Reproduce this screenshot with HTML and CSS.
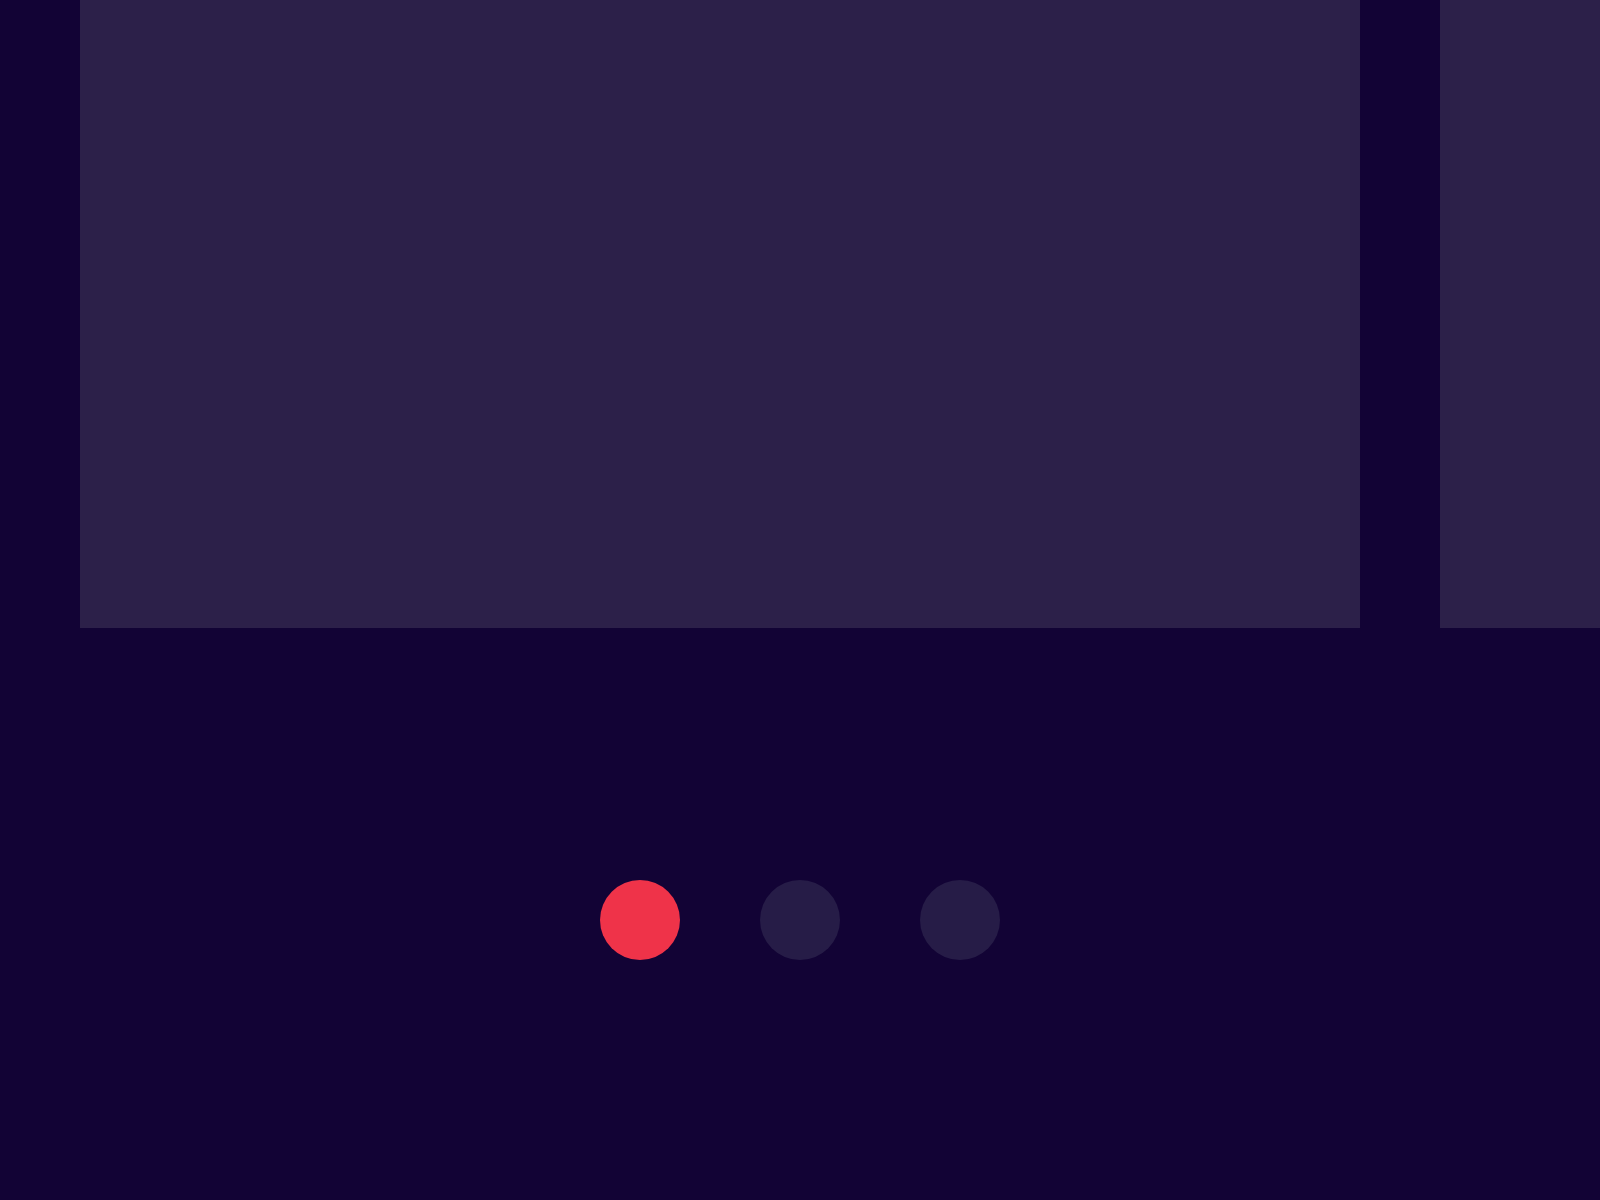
FILE: index.html
```html
<!DOCTYPE html>
<html lang="en">
<head>
<meta charset="utf-8">
<title>Carousel</title>
<link rel="stylesheet" href="styles.css">
</head>
<body>
<main class="page">
  <div class="viewport">
    <div class="track">
      <div class="slide"></div>
      <div class="slide"></div>
      <div class="slide"></div>
    </div>
  </div>
  <div class="dots">
    <span class="dot dot-active"></span>
    <span class="dot"></span>
    <span class="dot"></span>
  </div>
</main>
</body>
</html>
```
FILE: styles.css
```css
html, body {
  margin: 0;
  padding: 0;
  background: #120335;
  font-family: "Liberation Sans", Arial, sans-serif;
}
.page {
  width: 1600px;
  height: 1200px;
  overflow: hidden;
}
.viewport {
  width: 100%;
  overflow: hidden;
}
.track {
  display: flex;
  gap: 80px;
  padding-left: 80px;
}
.slide {
  flex: 0 0 1280px;
  height: 628px;
  background: #2c2049;
}
.dots {
  display: flex;
  justify-content: center;
  gap: 80px;
  margin-top: 252px;
}
.dot {
  width: 80px;
  height: 80px;
  border-radius: 50%;
  background: #261c47;
}
.dot-active {
  background: #ef3349;
}
```
